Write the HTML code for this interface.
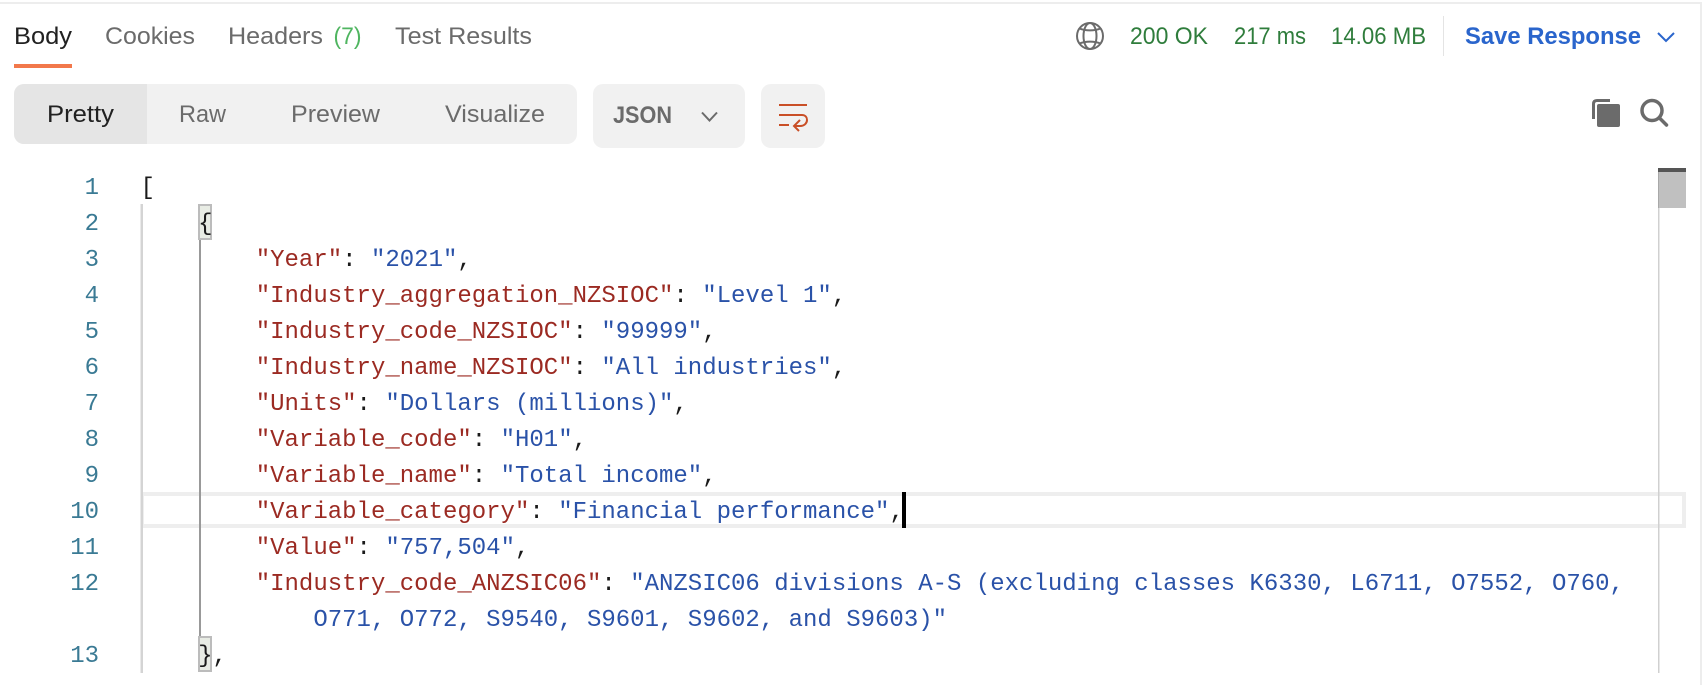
<!DOCTYPE html>
<html>
<head>
<meta charset="utf-8">
<style>
html,body{margin:0;padding:0;background:#fff;width:1704px;height:686px;overflow:hidden}
svg{display:block}
.s{font-family:"Liberation Sans",sans-serif;font-size:24px}
.m{font-family:"Liberation Mono",monospace;font-size:24px;white-space:pre}
.n{fill:#3a7a94;text-anchor:end}
.k{fill:#9b2a22}
.v{fill:#2a52a8}
.p{fill:#1a1a1a}
</style>
</head>
<body>
<svg width="1704" height="686" viewBox="0 0 1704 686" xmlns="http://www.w3.org/2000/svg">
<rect x="0" y="2" width="1702" height="2" fill="#ededed"/>
<rect x="1700" y="2" width="2" height="683" fill="#ededed"/>

<!-- tabs -->
<text class="s" x="14" y="44" fill="#212121" textLength="58" lengthAdjust="spacingAndGlyphs">Body</text>
<text class="s" x="105" y="44" fill="#6b6b6b" textLength="90" lengthAdjust="spacingAndGlyphs">Cookies</text>
<text class="s" x="228" y="44" fill="#6b6b6b" textLength="95" lengthAdjust="spacingAndGlyphs">Headers</text>
<text class="s" x="333.500" y="44" fill="#4fb560" textLength="28" lengthAdjust="spacingAndGlyphs">(7)</text>
<text class="s" x="395" y="44" fill="#6b6b6b" textLength="137" lengthAdjust="spacingAndGlyphs">Test Results</text>
<rect x="14" y="64" width="58" height="4" fill="#f2784b"/>

<!-- status -->
<g fill="none" stroke="#6b6b6b" stroke-width="2">
<circle cx="1090" cy="36" r="13"/>
<ellipse cx="1090" cy="36" rx="6.5" ry="13"/>
<path d="M1079.5 28.5c6 2.500 15 2.500 21 0M1079.500 43.500c6-2.500 15-2.500 21 0"/>
</g>
<text class="s" x="1130" y="44" fill="#2f7d3c" textLength="78" lengthAdjust="spacingAndGlyphs" xml:space="preserve">200 OK</text>
<text class="s" x="1234" y="44" fill="#2f7d3c" textLength="72" lengthAdjust="spacingAndGlyphs">217 ms</text>
<text class="s" x="1331" y="44" fill="#2f7d3c" textLength="95" lengthAdjust="spacingAndGlyphs">14.06 MB</text>
<rect x="1443" y="16" width="1" height="40" fill="#e4e4e4"/>
<text class="s" x="1465" y="44" fill="#2a65cc" font-weight="700" textLength="176" lengthAdjust="spacingAndGlyphs">Save Response</text>
<path d="M1658 33l8 8 8-8" fill="none" stroke="#2a65cc" stroke-width="2"/>

<!-- segmented -->
<rect x="14" y="84" width="563" height="60" rx="10" fill="#f1f1f1"/>
<path d="M147 84H24a10 10 0 0 0-10 10v40a10 10 0 0 0 10 10h123z" fill="#e5e5e5"/>
<text class="s" x="47" y="122" fill="#212121" textLength="67" lengthAdjust="spacingAndGlyphs">Pretty</text>
<text class="s" x="179" y="122" fill="#6b6b6b" textLength="47" lengthAdjust="spacingAndGlyphs">Raw</text>
<text class="s" x="291" y="122" fill="#6b6b6b" textLength="89" lengthAdjust="spacingAndGlyphs">Preview</text>
<text class="s" x="445" y="122" fill="#6b6b6b" textLength="100" lengthAdjust="spacingAndGlyphs">Visualize</text>

<rect x="593" y="84" width="152" height="64" rx="10" fill="#f1f1f1"/>
<text class="s" x="613" y="123" fill="#6b6b6b" font-weight="700" textLength="59" lengthAdjust="spacingAndGlyphs">JSON</text>
<path d="M702 112.500l7.500 8 7.500-8" fill="none" stroke="#6b6b6b" stroke-width="2"/>

<rect x="761" y="84" width="64" height="64" rx="10" fill="#f1f1f1"/>
<g fill="none" stroke="#c94f27" stroke-width="2">
<path d="M779 105h28"/>
<path d="M779 115h23c3.500 0 5 2.500 5 5s-2 6-7 6h-5"/>
<path d="M779 125h10"/>
<path d="M800 120l-6 6 5 5"/>
</g>

<!-- copy/search -->
<path d="M1593.500 119v-15q0-3.500 3.500-3.500h13" fill="none" stroke="#6b6b6b" stroke-width="3"/>
<rect x="1597" y="104" width="23" height="23" rx="2" fill="#6b6b6b"/>
<circle cx="1652" cy="110.500" r="10" fill="none" stroke="#6b6b6b" stroke-width="3.500"/>
<path d="M1659.500 118l7 7" fill="none" stroke="#6b6b6b" stroke-width="3.500" stroke-linecap="round"/>

<!-- editor -->
<rect x="141" y="492" width="1545" height="36" fill="#eeeeee"/>
<rect x="144" y="496" width="1538" height="28" fill="#fff"/>
<rect x="140.500" y="204" width="2.500" height="469" fill="#d4d4d4"/>
<rect x="199" y="240" width="2" height="397" fill="#999"/>
<rect x="1658" y="208" width="1.500" height="465" fill="#d0d0d0"/>
<rect x="1658" y="172" width="28" height="36" fill="#c0c0c0"/>
<rect x="1658" y="172" width="1" height="36" fill="#a8a8a8"/>
<rect x="1658" y="168" width="28" height="4" fill="#555"/>
<rect x="199" y="205" width="12" height="34" fill="#e8ece4" stroke="#bcbcbc" stroke-width="2"/>
<rect x="199" y="637" width="12" height="34" fill="#e8ece4" stroke="#bcbcbc" stroke-width="2"/>
<rect x="902" y="492" width="4" height="36" fill="#000"/>

<g class="m">
<text class="m n" x="99" y="194">1</text>
<text class="m n" x="99" y="230">2</text>
<text class="m n" x="99" y="266">3</text>
<text class="m n" x="99" y="302">4</text>
<text class="m n" x="99" y="338">5</text>
<text class="m n" x="99" y="374">6</text>
<text class="m n" x="99" y="410">7</text>
<text class="m n" x="99" y="446">8</text>
<text class="m n" x="99" y="482">9</text>
<text class="m n" x="99" y="518">10</text>
<text class="m n" x="99" y="554">11</text>
<text class="m n" x="99" y="590">12</text>
<text class="m n" x="99" y="662">13</text>

<text class="m p" x="140.500" y="194">[</text>
<text class="m p" x="140.500" y="230" xml:space="preserve">    {</text>
<text class="m" x="140.500" y="266" xml:space="preserve">        <tspan class="k">"Year"</tspan><tspan class="p">: </tspan><tspan class="v">"2021"</tspan><tspan class="p">,</tspan></text>
<text class="m" x="140.500" y="302" xml:space="preserve">        <tspan class="k">"Industry_aggregation_NZSIOC"</tspan><tspan class="p">: </tspan><tspan class="v">"Level 1"</tspan><tspan class="p">,</tspan></text>
<text class="m" x="140.500" y="338" xml:space="preserve">        <tspan class="k">"Industry_code_NZSIOC"</tspan><tspan class="p">: </tspan><tspan class="v">"99999"</tspan><tspan class="p">,</tspan></text>
<text class="m" x="140.500" y="374" xml:space="preserve">        <tspan class="k">"Industry_name_NZSIOC"</tspan><tspan class="p">: </tspan><tspan class="v">"All industries"</tspan><tspan class="p">,</tspan></text>
<text class="m" x="140.500" y="410" xml:space="preserve">        <tspan class="k">"Units"</tspan><tspan class="p">: </tspan><tspan class="v">"Dollars (millions)"</tspan><tspan class="p">,</tspan></text>
<text class="m" x="140.500" y="446" xml:space="preserve">        <tspan class="k">"Variable_code"</tspan><tspan class="p">: </tspan><tspan class="v">"H01"</tspan><tspan class="p">,</tspan></text>
<text class="m" x="140.500" y="482" xml:space="preserve">        <tspan class="k">"Variable_name"</tspan><tspan class="p">: </tspan><tspan class="v">"Total income"</tspan><tspan class="p">,</tspan></text>
<text class="m" x="140.500" y="518" xml:space="preserve">        <tspan class="k">"Variable_category"</tspan><tspan class="p">: </tspan><tspan class="v">"Financial performance"</tspan><tspan class="p">,</tspan></text>
<text class="m" x="140.500" y="554" xml:space="preserve">        <tspan class="k">"Value"</tspan><tspan class="p">: </tspan><tspan class="v">"757,504"</tspan><tspan class="p">,</tspan></text>
<text class="m" x="140.500" y="590" xml:space="preserve">        <tspan class="k">"Industry_code_ANZSIC06"</tspan><tspan class="p">: </tspan><tspan class="v">"ANZSIC06 divisions A-S (excluding classes K6330, L6711, O7552, O760,</tspan></text>
<text class="m v" x="140.500" y="626" xml:space="preserve">            O771, O772, S9540, S9601, S9602, and S9603)"</text>
<text class="m p" x="140.500" y="662" xml:space="preserve">    },</text>
</g>
</svg>
</body>
</html>
